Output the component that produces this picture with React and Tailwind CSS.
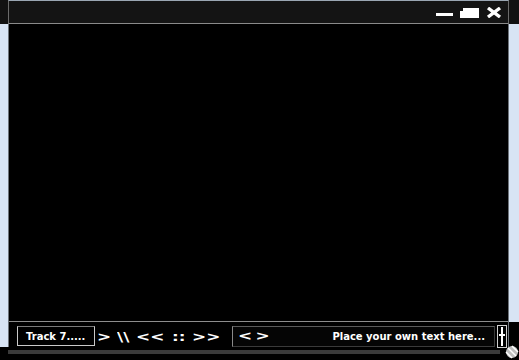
import React from 'react';

const font = { fontFamily: '"DejaVu Sans", "Liberation Sans", sans-serif' };

const TitleBar = () => (
  <div className="flex h-[24px]">
    <div className="w-[8px] bg-[#121212]" />
    <div className="flex flex-1 items-center justify-end border-t border-b border-l border-r border-t-[#9aa6b3] border-b-[#8a8a8a] border-l-[#6b6b6b] border-r-[#6b6b6b] bg-[#141414] pr-[6px]">
      <div className="mr-[7px] mt-[4px] h-[3px] w-[17px] bg-white" />
      <svg width="19" height="10" viewBox="0 0 19 10" className="mr-[7px] mt-[1px]">
        <path d="M3 0H19V10H0V3H3Z" fill="#fff" />
      </svg>
      <svg width="16" height="11" viewBox="0 0 16 11" className="mt-[1px]">
        <path d="M2 1L14 10M14 1L2 10" stroke="#fff" strokeWidth="3.4" />
      </svg>
    </div>
    <div className="w-[10px] bg-[#121212]" />
  </div>
);

const Slider = () => (
  <div className="relative ml-[2px] h-[23px] w-[10px] border border-[#cfcfcf]">
    <div className="absolute left-[3px] top-[1px] h-[19px] w-[2px] bg-white" />
    <div className="absolute left-[1px] top-[8px] h-[2px] w-[6px] bg-white" />
  </div>
);

const Btn = ({ children, className = '' }) => (
  <span className={`inline-block origin-left scale-x-[1.3] ${className}`}>{children}</span>
);

const ControlBar = () => (
  <div
    className="flex h-[26px] items-center border-t border-[#8d8d8d] bg-black pl-[8px] pr-[1px] pt-[3px] text-white"
    style={font}
  >
    <div className="flex h-[20px] w-[78px] items-center border border-[#c9c9c9] border-t-[#7a7a7a] pl-[8px] pt-[1px] text-[10px] font-bold">
      Track 7.....
    </div>
    <div className="relative ml-[2px] h-[20px] w-[132px] text-[13px] font-bold">
      <Btn className="absolute left-[0px] top-[1px]">&gt;</Btn>
      <Btn className="absolute left-[20px] top-[1px]">\\</Btn>
      <Btn className="absolute left-[39px] top-[1px]">&lt;&lt;</Btn>
      <Btn className="absolute left-[75px] top-[1px]">::</Btn>
      <Btn className="absolute left-[95px] top-[1px]">&gt;&gt;</Btn>
    </div>
    <div className="ml-[3px] flex h-[21px] flex-1 items-center justify-between border border-[#3a3a3a] border-l-[#8a8a8a] border-t-[#5a5a5a] bg-[#050505] pl-[5px] pr-[9px] text-[10px] font-bold">
      <Btn className="text-[13px]">&lt;&thinsp;&gt;</Btn>
      <span>Place your own text here...</span>
    </div>
    <Slider />
  </div>
);

export default function App() {
  return (
    <div className="flex h-[360px] w-[519px] flex-col overflow-hidden bg-black">
      <TitleBar />
      <div className="flex flex-1">
        <div className="w-[8px] bg-[#d8e4f4]" />
        <div className="flex flex-1 flex-col border-l border-r border-[#6e747b] bg-black">
          <div className="flex-1" />
          <ControlBar />
        </div>
        <div className="flex w-[10px] flex-col">
          <div className="flex-1 bg-[#d8e4f4]" />
          <div className="h-[25px] bg-black" />
        </div>
      </div>
      <div className="flex h-[13px] items-start">
        <div className="w-[8px]" />
        <div className="mt-[3px] h-[4px] w-[492px] bg-[#3a3a3a]" />
        <svg width="14" height="14" viewBox="0 0 14 14" className="ml-[5px] -mt-[2px]">
          <circle cx="7" cy="7" r="6" fill="#bfbfbf" />
          <path d="M3 3L11 11M1 7L7 13M7 1L13 7" stroke="#fff" strokeWidth="1.5" />
        </svg>
      </div>
    </div>
  );
}
